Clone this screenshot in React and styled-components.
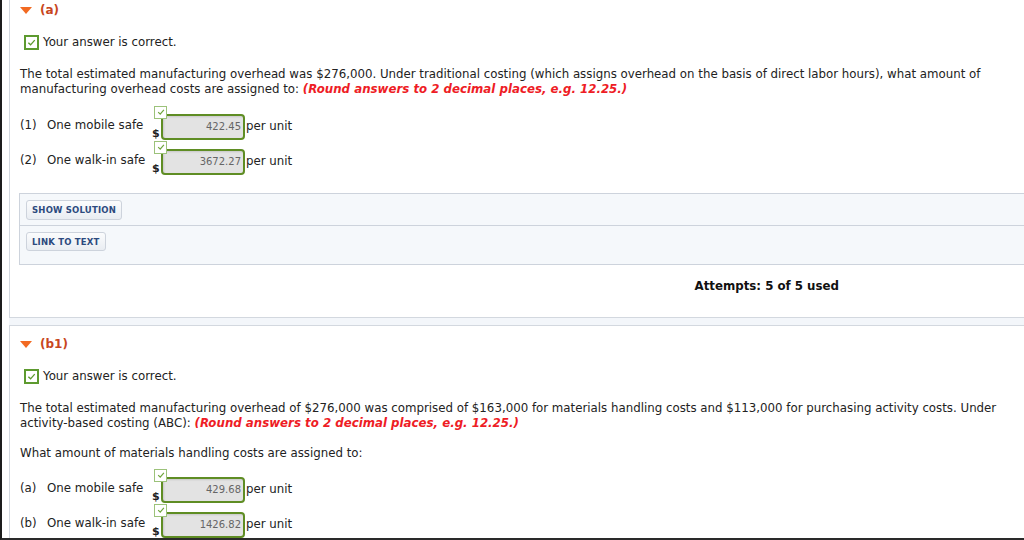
import React from 'react';
import styled, { createGlobalStyle } from 'styled-components';

const Global = createGlobalStyle`
	html, body {
		margin: 0;
		padding: 0;
		background: #fff;
	}
	body {
		font-family: "DejaVu Sans", Verdana, sans-serif;
		font-size: 11.8px;
		color: #222;
	}
`;

const Frame = styled.div`
	box-sizing: border-box;
	width: 1024px;
	height: 540px;
	overflow: hidden;
	border-left: 2px solid #1c1c1c;
	border-bottom: 2px solid #2a2a2a;
	padding-left: 7px;
	background: #fff;
`;

const Stack = styled.div`
	background: #f3f6fa;
	display: flex;
	flex-direction: column;
	gap: 7px;
`;

const Card = styled.section`
	background: #fff;
	border: 1px solid #d3d8df;
	border-right: none;
	border-top: ${p => (p.$cut ? 'none' : '1px solid #d3d8df')};
	padding: ${p => (p.$cut ? '0' : '8px')} 0 0 10px;
`;

const Header = styled.div`
	display: flex;
	align-items: center;
	gap: 8px;
	height: 20px;
`;

const Triangle = styled.span`
	width: 0;
	height: 0;
	border-left: 6px solid transparent;
	border-right: 6px solid transparent;
	border-top: 7px solid #f26a22;
	margin-top: 1px;
`;

const Title = styled.span`
	font-weight: bold;
	font-size: 12px;
	color: #c8461e;
`;

const Correct = styled.div`
	display: flex;
	align-items: center;
	gap: 4px;
	margin: 15px 0 0 4px;
	line-height: 15px;
`;

const BigCheck = styled.span`
	box-sizing: border-box;
	width: 15px;
	height: 15px;
	border: 2px solid #5d9a2f;
	background: #fff;
	display: flex;
	align-items: center;
	justify-content: center;
`;

const Para = styled.p`
	margin: ${p => p.$gap || 17}px 0 0;
	line-height: 15px;
	padding-right: 10px;
`;

const Hint = styled.em`
	color: #ee1c25;
	font-weight: bold;
`;

const Row = styled.div`
	display: flex;
	align-items: center;
	height: 35px;
	margin-top: ${p => p.$gap || 0}px;
`;

const Label = styled.div`
	width: 132px;
	padding-top: 6px;
	line-height: 15px;
	display: flex;
	white-space: nowrap;
`;

const Num = styled.span`
	width: 27px;
`;

const Field = styled.div`
	position: relative;
	display: flex;
	align-items: center;
	padding-top: 8px;
`;

const SmallCheck = styled.span`
	position: absolute;
	top: 0;
	left: 2px;
	box-sizing: border-box;
	width: 13px;
	height: 13px;
	border: 1px solid #9cc27a;
	background: #fff;
	display: flex;
	align-items: center;
	justify-content: center;
`;

const Dollar = styled.span`
	align-self: flex-end;
	width: 9px;
	font-size: 11px;
	font-weight: bold;
	line-height: 12px;
`;

const Value = styled.input`
	box-sizing: border-box;
	width: 84px;
	height: 26px;
	border: 2px solid #5f8d24;
	border-radius: 4px;
	background: #e3e3e3;
	box-shadow: inset 1px 1px 2px rgba(0, 0, 0, 0.12);
	font-family: "DejaVu Sans", Verdana, sans-serif;
	font-size: 10px;
	color: #666;
	text-align: right;
	padding: 0 2px 0 0;
	outline: none;
`;

const Unit = styled.span`
	margin-left: 1px;
	line-height: 15px;
`;

const SolutionBox = styled.div`
	margin-top: 18px;
	margin-left: -1px;
	background: #f5f8fb;
	border: 1px solid #cdd3dc;
	border-right: none;
`;

const SolutionRow = styled.div`
	padding: ${p => (p.$last ? '6px 6px 13px' : '6px 6px 5px')};
	border-bottom: ${p => (p.$last ? 'none' : '1px solid #cdd3dc')};
`;

const Button = styled.button`
	height: ${p => p.$h || 20}px;
	padding: 0 5px;
	border: 1px solid #cdd3dc;
	border-radius: 3px;
	background: linear-gradient(#fbfcfd, #e9edf2);
	font-family: "DejaVu Sans", Verdana, sans-serif;
	font-size: 8.5px;
	font-weight: bold;
	color: #2c4a7e;
	letter-spacing: 0.2px;
	cursor: pointer;
`;

const Attempts = styled.div`
	display: flex;
	justify-content: flex-end;
	padding: 14px 185px 23px 0;
	font-weight: bold;
	line-height: 15px;
	color: #111;
`;

const Tick = ({ size = 9, color = '#5d9a2f' }) => (
	<svg width={size} height={size} viewBox="0 0 10 10">
		<polyline points="1.5,5.2 4,7.6 8.6,2.4" fill="none" stroke={color} strokeWidth="1.5" />
	</svg>
);

const Answer = ({ num, label, value, gap }) => (
	<Row $gap={gap}>
		<Label>
			<Num>{num}</Num>
			<span>{label}</span>
		</Label>
		<Field>
			<SmallCheck>
				<Tick size={8} color="#6fa53c" />
			</SmallCheck>
			<Dollar>$</Dollar>
			<Value readOnly value={value} />
			<Unit>per unit</Unit>
		</Field>
	</Row>
);

const Part = ({ title, cut, children }) => (
	<Card $cut={cut}>
		<Header>
			<Triangle />
			<Title>{title}</Title>
		</Header>
		<Correct>
			<BigCheck>
				<Tick />
			</BigCheck>
			<span>Your answer is correct.</span>
		</Correct>
		{children}
	</Card>
);

export default function App() {
	return (
		<Frame>
			<Global />
			<Stack>
				<Part title="(a)" cut>
					<Para>
						The total estimated manufacturing overhead was $276,000. Under traditional costing (which assigns overhead on the basis of direct labor hours), what amount of manufacturing overhead costs are assigned to: <Hint>(Round answers to 2 decimal places, e.g. 12.25.)</Hint>
					</Para>
					<Answer num="(1)" label="One mobile safe" value="422.45" gap={8} />
					<Answer num="(2)" label="One walk-in safe" value="3672.27" />
					<SolutionBox>
						<SolutionRow>
							<Button>SHOW SOLUTION</Button>
						</SolutionRow>
						<SolutionRow $last>
							<Button $h={19}>LINK TO TEXT</Button>
						</SolutionRow>
					</SolutionBox>
					<Attempts>Attempts: 5 of 5 used</Attempts>
				</Part>
				<Part title="(b1)">
					<Para>
						The total estimated manufacturing overhead of $276,000 was comprised of $163,000 for materials handling costs and $113,000 for purchasing activity costs. Under activity-based costing (ABC): <Hint>(Round answers to 2 decimal places, e.g. 12.25.)</Hint>
					</Para>
					<Para $gap={15}>What amount of materials handling costs are assigned to:</Para>
					<Answer num="(a)" label="One mobile safe" value="429.68" gap={7} />
					<Answer num="(b)" label="One walk-in safe" value="1426.82" />
				</Part>
			</Stack>
		</Frame>
	);
}
